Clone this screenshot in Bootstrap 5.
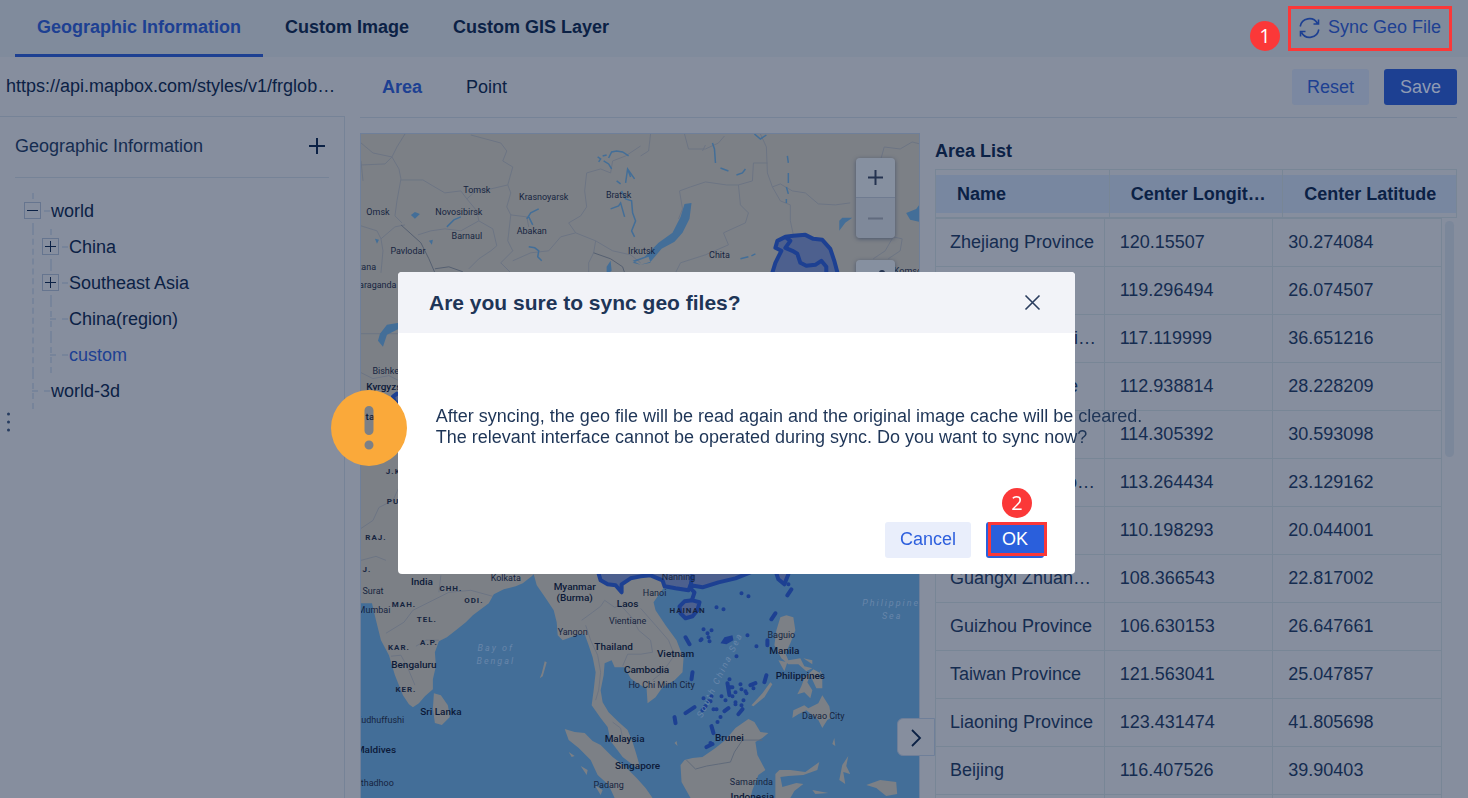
<!DOCTYPE html>
<html lang="en">
<head>
<meta charset="utf-8">
<meta name="viewport" content="width=device-width, initial-scale=1">
<title>Geographic Information</title>
<link href="https://cdn.jsdelivr.net/npm/bootstrap@5.3.0/dist/css/bootstrap.min.css" rel="stylesheet">
<style>
:root{--page:#868e9e;--bar:#808b9c;--line:#768397;--ink:#0b2145;--ink2:#152c50;--accent:#1d4092;--soft:#7b88a1;--red:#fb3838;--land:#7c8086;--sea:#436e98}
body{font-family:"Liberation Sans",Arial,sans-serif;font-size:18px;line-height:21px;color:var(--ink);background:var(--page);height:100vh;overflow:hidden}
.topbar{background:var(--bar);height:57px}
.topbar .nav-link{color:var(--ink);font-weight:700;padding:17px 22px 16px;border-bottom:3px solid transparent;line-height:21px}
.topbar .nav-link.active{color:var(--accent);border-color:var(--accent)}
.btn{font-size:18px;line-height:21px;border:0;border-radius:3px;height:36px;padding:0 15px}
.btn-sync{color:var(--accent);height:45px;padding:0 11px 2px;border-radius:0}
.callout-box{position:absolute;border:3px solid var(--red);pointer-events:none}
.callout-dot{position:absolute;width:30px;height:30px;border-radius:50%;background:var(--red);color:#fff;font:20px/30px "Open Sans","Noto Sans",sans-serif;text-align:center}
.side{width:345px;flex:none}
.url-row{height:59px;padding:0 6px}
.tree-panel{border:solid var(--line);border-width:1px 1px 0 0;padding:0 15px}
.tree-head{height:61px;border-bottom:1px solid var(--line);color:var(--ink2);padding-bottom:2px}
.grip{position:absolute;left:7px;top:412px}
.tree,.tree ul{list-style:none;margin:0;padding:0}
.tree{margin:15px 0 0 9px}
.tree ul{margin-left:18px;position:relative}
.tree ul::before{content:"";position:absolute;left:-10px;top:0;bottom:0;border-left:2px dashed #77849a}
.tree-node{height:36px;padding-left:27px;position:relative;display:flex;align-items:center}
.tree-node::before{content:"";position:absolute;left:8px;top:0;bottom:0;border-left:2px dashed #77849a}
.tree-node::after{content:"";position:absolute;left:8px;width:18px;top:17px;border-top:2px dashed #77849a}
.tree-node button{position:absolute;z-index:1;left:0;top:9px;width:17px;height:17px;padding:0;border:1px solid #66758f;background:var(--page);display:flex;color:var(--ink)}
.tree-node a{color:var(--ink);text-decoration:none}
.tree-node a.picked{color:var(--accent)}
.toolbar{height:61px;border-bottom:1px solid var(--line);flex:none}
.toolbar .nav-link{color:var(--ink);padding:8px 22px;line-height:21px}
.toolbar .nav-link.active{color:var(--accent);font-weight:700}
.btn-soft{background:var(--soft);color:var(--accent)}
.btn-main{background:var(--accent);color:#8f9bb3;padding:0 16px}
.map-box{border:1px solid #6f7f99;border-width:1px 1px 0;background:var(--sea)}
.map-box svg.world{display:block;width:100%;height:100%}
.zoomer{position:absolute;right:24px;top:24px;width:39px}
.zoomer button{display:flex;width:39px;height:40px;border:0;padding:0;background:#8690a0;align-items:center;justify-content:center;color:#243350}
.zoomer .pair{border-radius:4px;overflow:hidden;box-shadow:0 1px 4px #4a556b}
.fold{position:absolute;right:-16px;top:584px;width:38px;height:38px;border:1px solid #6f7f99;background:var(--page);border-radius:6px 0 0 6px;padding:0;color:var(--ink)}
.areas{width:522px;flex:none;overflow:hidden}
.grid{table-layout:fixed;width:100%;border-collapse:collapse}
.grid td,.grid th{border:1px solid #788696;padding:0}
.grid-head th{height:48px}
.grid-head th>div{background:#7887a0;height:38px;line-height:38px;padding:0 16px 0 22px;margin:0 -1px}
.grid-body{width:507px}
.grid-body td{height:48px;color:var(--ink2)}
.grid-body td>div{padding:0 9px 0 15px}
.grid-body td:first-child>div{padding:0 6px 0 14px}
.thumb{width:9px;height:236px;border-radius:5px;background:#7b879a;margin:3px 3px 0 0}
.veil{position:fixed;inset:0;z-index:10;padding:48px 0 0 5px}
.ask{width:677px;background:#fff;border-radius:4px;color:#1e3557}
.ask-head{height:61px;background:#f2f3f8;border-radius:4px 4px 0 0;padding:0 31px}
.ask-head h1{font-size:21px;line-height:24px;font-weight:700;margin:0}
.ask-body{height:189px}
.ask-foot{padding:0 31px 16px}
.ask .btn-soft{background:#e9eefb;color:#2d5fdd;padding-bottom:2px}
.ask .btn-main{background:#2a5fdc;color:#fff;padding-bottom:2px}
.world text{font-family:Roboto,"Open Sans",sans-serif;font-size:9px;fill:#16243f}
.world .big{font-weight:500;font-size:10px;fill:#0c1a38}
.world .st{font-weight:700;font-size:8px;letter-spacing:1px}
.world .wat{font-style:italic;font-size:9px;letter-spacing:2px;fill:#6886aa}
</style>
</head>
<body class="d-flex flex-column">
<header class="topbar d-flex justify-content-between flex-shrink-0">
  <nav class="nav" style="padding-left:15px">
    <a class="nav-link active" href="#">Geographic Information</a>
    <a class="nav-link" href="#">Custom Image</a>
    <a class="nav-link" href="#">Custom GIS Layer</a>
  </nav>
  <div class="align-self-start pe-3" style="padding-top:6px">
    <div class="position-relative">
      <button class="btn btn-sync d-flex align-items-center gap-2" type="button">
        <svg width="21" height="22" viewBox="0 0 21 22" fill="none" stroke="currentColor" stroke-width="1.600"><path d="M1.200 9.500A9.300 9.300 0 0 1 18.500 6.500M19.500 2.500V7H14.500M19.800 12.500A9.300 9.300 0 0 1 2.500 15.500M1.500 19.500V14.500H6.500"/></svg>
        Sync Geo File</button>
      <span class="callout-box top-0 bottom-0 start-0 end-0"></span>
      <span class="callout-dot" style="left:-38px;top:15px">1</span>
    </div>
  </div>
</header>
<main class="d-flex flex-grow-1" style="min-height:0">
  <aside class="side d-flex flex-column">
    <div class="url-row d-flex align-items-center">https://api.mapbox.com/styles/v1/frglob…</div>
    <div class="tree-panel flex-grow-1">
      <div class="tree-head d-flex align-items-center justify-content-between"><span>Geographic Information</span>
        <button class="btn p-0 d-flex align-items-center me-1" type="button" aria-label="Add"><svg width="16" height="16" viewBox="0 0 16 16" stroke="#0b2145" stroke-width="2"><path d="M8 0V16M0 8H16"/></svg></button></div>
      <ul class="tree">
        <li><div class="tree-node"><button type="button" aria-label="Collapse"><svg width="15" height="15" stroke="currentColor"><path d="M2 7.500H13"/></svg></button><a href="#">world</a></div>
          <ul>
            <li class="tree-node"><button type="button" aria-label="Expand"><svg width="15" height="15" stroke="currentColor"><path d="M2 7.500H13M7.500 2V13"/></svg></button><a href="#">China</a></li>
            <li class="tree-node"><button type="button" aria-label="Expand"><svg width="15" height="15" stroke="currentColor"><path d="M2 7.500H13M7.500 2V13"/></svg></button><a href="#">Southeast Asia</a></li>
            <li class="tree-node"><a href="#">China(region)</a></li>
            <li class="tree-node"><a href="#" class="picked">custom</a></li>
          </ul></li>
        <li class="tree-node"><a href="#">world-3d</a></li>
      </ul>
    </div>
    <svg class="grip" width="3" height="20" fill="#263c60"><circle cx="1.500" cy="2" r="1.500"/><circle cx="1.500" cy="10" r="1.500"/><circle cx="1.500" cy="18" r="1.500"/></svg>
  </aside>
  <section class="d-flex flex-column flex-grow-1" style="padding:0 11px 0 15px;min-width:0">
    <div class="toolbar d-flex align-items-center justify-content-between">
      <nav class="nav"><a class="nav-link active" href="#">Area</a><a class="nav-link" href="#">Point</a></nav>
      <div class="d-flex" style="gap:15px"><button class="btn btn-soft" type="button">Reset</button><button class="btn btn-main" type="button">Save</button></div>
    </div>
    <div class="d-flex flex-grow-1" style="gap:15px;padding-top:15px;min-height:0">
      <div class="map-box position-relative flex-grow-1">
        <svg class="world" viewBox="360 133 560 665" preserveAspectRatio="xMinYMin slice">
          <rect x="360" y="133" width="560" height="665" fill="#7c8086"/>
          <g fill="none" stroke="#6c7484" stroke-width="1">
            <path d="M360 142L372 152L391 156L396 146L404 133M391 156L384 163L360 164M391 156L398 168L400 178L396 200L394 215L401 222M400 179L422 179L432 185L444 192L460 190L466 198L475 190L490 188L507 184L512 166L502 160L506 150L500 142L485 138L470 134M507 184L510 192L506 206L510 214L526 216L528 226M510 214L507 240L512 250L500 262L510 272M466 198L476 210L478 220L492 228L496 245L490 250L478 258L468 268M360 225L376 230L380 238L394 226L404 224M380 238L382 250L380 272M444 228L460 230L478 220M417 234L430 230L444 228M512 260L530 252L548 250L560 236L575 232L568 222L580 215L586 206L584 190L586 172L600 168L610 172L612 160L625 155L640 145M575 232L595 240L612 250L630 254L640 262M360 160L362 180M595 240L593 252L588 262L588 272"/>
            <path d="M400 224L410 233L420 242L428 258L434 272M434 268L448 266L462 271M593 252L610 258L622 266L624 272" stroke="#555f70"/>
            <path d="M640 155L648 150L650 133M684 133L688 148L705 148L718 142L724 135M705 144L702 150M760 133L766 146L767 172L772 186L780 183L792 190L805 192L818 203L835 204L850 202M767 162L753 162L752 180L738 184L726 184L705 181L690 186L679 190L682 208L678 218M738 184L740 204L748 212L745 222L723 232L728 244L705 254L680 262L675 272M772 186L780 200L790 204L790 220L793 234M881 157L884 146L900 148L912 141L920 143M873 258L885 250L893 236L902 238L900 250L888 258"/>
            <path d="M360 333H398M360 372L372 378L388 375L398 380M360 528L372 520L378 507L392 500L398 487M360 560L375 556L385 560M385 633L403 622L412 610L432 600L448 592L470 590L492 596M415 646L425 640L438 640M390 656L400 655L407 668L414 685M440 575L438 592M581 620L592 612L600 606L604 600M585 625L590 640L597 655L600 672L598 690L595 700M604 600L614 607L620 605L632 618L638 630L650 640L652 652L640 654L627 654L622 666M640 608L655 625L668 640L674 655L662 672L652 680M612 722L620 728L622 738"/>
          </g>
          <g fill="#436e98">
            <path d="M691 202L689 218L682 232L674 241L661 248L650 261L640 264L632 260L644 256L658 242L672 232L680 216L684 203ZM640 264L650 262L648 256L632 262ZM920 203L916 208L906 212L910 219L920 221ZM839 220L842 217L852 217L845 222L839 230ZM410 214L414 211L419 213L414 218ZM398 322L386 324L379 333L377 340L382 346L386 334L398 328ZM606 266L610 260L611 270L606 274ZM374 238L378 239L376 243ZM428 240L432 239L431 244Z"/>
            <path d="M360 603H371L375 620L380 640L388 655L394 675L402 695L408 704L412 707L418 703L424 696L432 689L432 679L435 666L434 652L438 641L446 637L455 630L465 622L472 615L488 603L493 594L503 589L515 586L522 583L531 576L533 574L536 585L545 598L553 610L556 622L557 635L562 640L570 637L578 634L584 634L588 645L592 657L595 672L593 690L591 705L600 718L607 727L610 741L622 757L635 767L640 769L636 755L632 742L627 730L618 722L608 712L602 702L600 690L603 675L604 663L611 660L614 667L624 667L630 678L638 684L646 688L647 703L655 697L662 687L674 680L682 672L683 658L676 640L665 625L655 610L653 602L660 592L665 585L680 585L710 584L730 578L750 573H920V798H360Z"/>
          </g>
          <path fill="none" stroke="#436e98" stroke-width="1.500" d="M597 156L600 158L598 161M602 155L606 154M608 157L611 151L616 150L622 151L628 155M603 160L608 163L611 168M625 182L627 168L634 178M627 168L630 176M616 180L620 183M621 190L625 198L631 200L632 212L635 220L631 230L634 236M610 208L618 205L620 202L624 216M446 226L453 219L460 216M526 218L530 212L538 208M528 216L532 224M528 246L534 247L538 250L537 256L541 260M712 142L714 148L715 162M720 167L728 170M736 174L742 172L745 168M787 155L788 162M788 172L788 182M786 198V202M786 186L788 193M754 133L760 138L766 134M740 258L748 256M751 255L755 253"/>
          <g fill="#7c8086">
            <path d="M433 693L440 695L447 705L449 717L441 725L434 723L432 708ZM564 729L574 732L584 733L592 741L600 745L612 757L620 763L628 770L636 778L645 788L652 798H614L608 785L597 775L590 760L578 748L568 740ZM680 765L684 760L692 758L702 757L715 748L725 740L735 728L748 719L754 722L760 732L768 733L762 738L755 742L757 755L765 770L758 775L752 790L750 798H690L681 782ZM780 617L786 615L793 617L795 630L790 643L785 653L788 660L800 658L804 666L812 668L806 671L798 664L788 664L781 658L774 645L776 630ZM751 705L762 693L770 682L772 684L764 697L753 706ZM792 718L793 710L804 705L808 708L818 703L822 695L829 706L831 718L827 720L822 728L818 720L806 710L798 714ZM775 798V774L779 770L790 770L805 772L819 762L817 770L803 775L788 776L780 777L782 787L796 783L803 784L794 791L790 798ZM842 765L848 756L846 766L850 774L843 772L845 784L839 780ZM866 785L880 780L896 782L897 794L886 796L876 788ZM778 660L787 662L784 671ZM798 680L804 678L801 686L797 694L804 692L810 698L812 690L807 682L810 675L816 688L822 688L822 674L813 669L806 676ZM568 752L574 756L571 757ZM580 766L587 770L586 775ZM594 785L602 790L600 795ZM544 661L541 673L539 678L542 676L546 662ZM803 658L812 660L812 664ZM820 670L824 678L819 678ZM812 790L828 793L815 794ZM832 744L834 738L835 746ZM674 743L676 741L677 746Z"/>
          </g>
          <path d="M686 760L695 769L706 766L718 764L730 762L734 752L742 740L762 740" fill="none" stroke="#606a7a"/>
          <g fill="#4d608e" stroke="#1d4092" stroke-width="4" stroke-linejoin="round">
            <path d="M771 275L775 262L781 250L775 247L777 240L785 236L793 235L805 234L813 238L822 239L830 248L834 260L838 275Z"/>
            <path d="M785 236L790 240L785 247L792 250L797 253L800 262L806 265L815 264L821 260L826 266V274" fill="none"/>
            <path d="M597 570L600 580L607 584L615 585L621 592L621 584L630 578L640 576L650 575L662 580L664 586L675 588L688 590L690 585L702 587L718 582L735 578L750 572V565H597ZM679 606L684 601L692 600L699 602L697 610L692 616L685 618L680 613ZM775 570L778 579L784 584L788 574V570ZM392 396L396 393L402 394V402L394 402Z"/>
            <path d="M690 588L694 592L691 601M692 574L690 586" fill="none"/>
          </g>
          <path fill="none" stroke="#1d4092" stroke-width="4" stroke-linecap="round" d="M741 593h.1M748 596h.1M716 607h.1M723 609h.1M747 635h.1M756 646h.1M736 656h.1M788 584h.1M787 595L791 589M771 619L775 613M685 637L689 644M767 640V645M692 672L691 679M764 682L766 675M674 717L675 723M738 714L742 709M703 629h.1M707 633h.1M711 630h.1M701 639h.1M708 637h.1M709 641h.1M700 640h.1M729 679h.1M727 683L729 695M728 687h4M740 684h.1M741 689h.1M745 691h.1M735 692h.1M750 685L755 683M753 688h.1M725 700h.1M721 696h.1M732 696h.1M735 702h.1M716 709h.1M713 709h.1M724 711L728 708M702 710L705 706M708 701h.1M711 696h.1M685 713L694 707M703 698h.1M710 701h.1M746 693h.1M735 704h.1M743 700h.1M741 705h.1M720 717h.1M717 722h.1M711 726L713 733M706 747L712 744M710 743h.1"/>
          <path fill="#1d4092" d="M720 643L724 637L732 635L733 640L726 644Z"/>
          <g text-anchor="middle" transform="translate(0 -1)">
            <text x="476" y="193">Tomsk</text><text x="543" y="200">Krasnoyarsk</text><text x="618" y="198">Bratsk</text><text x="377" y="215">Omsk</text><text x="458" y="215">Novosibirsk</text><text x="466" y="239">Barnaul</text><text x="531" y="234">Abakan</text><text x="407" y="254">Pavlodar</text><text x="641" y="254">Irkutsk</text><text x="719" y="258">Chita</text><text x="920" y="274">Komsomolsk</text><text x="361" y="270">Astana</text><text x="374" y="288">Karaganda</text><text x="387" y="374">Bishkek</text><text class="big" x="390" y="390">Kyrgyzstan</text><text class="big" x="369" y="420">ta</text><text class="st" x="394" y="475">J.K.</text><text class="st" x="397" y="505">PUN.</text><text class="st" x="375" y="541">RAJ.</text><text class="st" x="366" y="573">J.</text>
            <text class="big" x="421" y="586">India</text><text x="505" y="582">Kolkata</text><text class="st" x="450" y="592">CHH.</text><text x="372" y="595">Surat</text><text class="st" x="473" y="604">ODI.</text><text class="st" x="403" y="608">MAH.</text><text x="373" y="614">Mumbai</text><text class="st" x="426" y="623">TEL.</text><text class="st" x="428" y="646">A.P.</text><text class="st" x="398" y="651">KAR.</text><text class="big" x="413" y="669">Bengaluru</text><text class="st" x="405" y="693">KER.</text><text class="big" x="440" y="716">Sri Lanka</text><text x="379" y="724">Kudhuffushi</text><text class="big" x="375" y="754">Maldives</text><text x="372" y="787">Hithadhoo</text>
            <text class="wat" x="495" y="652">Bay of</text><text class="wat" x="495" y="665">Bengal</text>
            <text class="big" x="574" y="591">Myanmar</text><text class="big" x="574" y="602">(Burma)</text><text class="big" x="627" y="608">Laos</text><text x="627" y="625">Vientiane</text><text x="572" y="636">Yangon</text><text class="big" x="613" y="651">Thailand</text><text x="678" y="581">Nanning</text><text x="654" y="597">Hanoi</text><text class="st" x="687" y="614">HAINAN</text><text class="big" x="675" y="658">Vietnam</text><text class="big" x="646" y="674">Cambodia</text><text x="661" y="689">Ho Chi Minh City</text><text class="big" x="624" y="743">Malaysia</text><text class="big" x="637" y="770">Singapore</text><text x="608" y="789">Padang</text><text class="big" x="729" y="742">Brunei</text><text x="751" y="786">Samarinda</text><text class="big" x="752" y="801">Indonesia</text><text x="781" y="639">Baguio</text><text class="big" x="784" y="655">Manila</text><text class="big" x="800" y="680">Philippines</text><text x="823" y="720">Davao City</text>
            <text class="wat" x="891" y="607">Philippine</text><text class="wat" x="892" y="620">Sea</text><text class="wat" transform="translate(722 677) rotate(-64)">South China Sea</text>
          </g>
        </svg>
        <div class="zoomer">
          <div class="pair"><button type="button" aria-label="Zoom in" style="border-bottom:1px solid #6f7b90"><svg width="15" height="15" stroke="currentColor" stroke-width="2"><path d="M7.500 0V15M0 7.500H15"/></svg></button><button type="button" aria-label="Zoom out" style="background:#7f899a;color:#616b7e"><svg width="15" height="15" stroke="currentColor" stroke-width="2"><path d="M0 7.500H15"/></svg></button></div>
          <div class="pair" style="margin-top:22px"><button type="button" aria-label="Draw"><svg width="20" height="26" viewBox="0 0 20 26" fill="none" stroke="currentColor" stroke-width="2"><circle cx="16" cy="6" r="2"/><path d="M14 8L5 18"/></svg></button></div>
        </div>
        <button class="fold" type="button" aria-label="Collapse list"><svg width="12" height="20" viewBox="0 0 12 20" fill="none" stroke="currentColor" stroke-width="1.800"><path d="M2 2L10 10L2 18"/></svg></button>
      </div>
      <div class="areas">
        <h2 class="fw-bold m-0" style="font-size:18px;line-height:36px">Area List</h2>
        <table class="grid grid-head"><thead><tr><th><div class="text-truncate">Name</div></th><th><div class="text-truncate">Center Longitude</div></th><th><div class="text-truncate">Center Latitude</div></th></tr></thead></table>
        <div class="d-flex justify-content-between">
        <table class="grid grid-body"><tbody>
          <tr><td><div class="text-truncate">Zhejiang Province</div></td><td><div>120.15507</div></td><td><div>30.274084</div></td></tr>
          <tr><td><div class="text-truncate">Fujian Province</div></td><td><div>119.296494</div></td><td><div>26.074507</div></td></tr>
          <tr><td><div class="text-truncate">Shandong Province</div></td><td><div>117.119999</div></td><td><div>36.651216</div></td></tr>
          <tr><td><div class="text-truncate">Hunan Province</div></td><td><div>112.938814</div></td><td><div>28.228209</div></td></tr>
          <tr><td><div class="text-truncate">Hubei Province</div></td><td><div>114.305392</div></td><td><div>30.593098</div></td></tr>
          <tr><td><div class="text-truncate">Guangdong Province</div></td><td><div>113.264434</div></td><td><div>23.129162</div></td></tr>
          <tr><td><div class="text-truncate">Hainan</div></td><td><div>110.198293</div></td><td><div>20.044001</div></td></tr>
          <tr><td><div class="text-truncate">Guangxi Zhuang Region</div></td><td><div>108.366543</div></td><td><div>22.817002</div></td></tr>
          <tr><td><div class="text-truncate">Guizhou Province</div></td><td><div>106.630153</div></td><td><div>26.647661</div></td></tr>
          <tr><td><div class="text-truncate">Taiwan Province</div></td><td><div>121.563041</div></td><td><div>25.047857</div></td></tr>
          <tr><td><div class="text-truncate">Liaoning Province</div></td><td><div>123.431474</div></td><td><div>41.805698</div></td></tr>
          <tr><td><div class="text-truncate">Beijing</div></td><td><div>116.407526</div></td><td><div>39.90403</div></td></tr>
          <tr><td></td><td></td><td></td></tr>
        </tbody></table>
        <div class="thumb"></div>
        </div>
      </div>
    </div>
  </section>
</main>
<div class="veil d-flex align-items-center justify-content-center">
  <div class="ask" role="dialog" aria-labelledby="ask-title">
    <div class="ask-head d-flex align-items-center justify-content-between"><h1 id="ask-title">Are you sure to sync geo files?</h1>
      <button class="btn p-0 d-flex align-items-center" type="button" aria-label="Close" style="margin-right:3px"><svg width="17" height="17" viewBox="0 0 17 17" stroke="#2a3d5e" stroke-width="1.600"><path d="M1.500 1.500L15.500 15.500M15.500 1.500L1.500 15.500"/></svg></button></div>
    <div class="ask-body d-flex align-items-center justify-content-center">
      <svg class="flex-shrink-0" width="76" height="76" viewBox="0 0 76 76"><path fill="#faa93a" fill-rule="evenodd" d="M38 0A38 38 0 1 1 38 76A38 38 0 1 1 38 0ZM38 16A4.500 4.500 0 0 0 33.500 20.500V40.500A4.500 4.500 0 0 0 42.500 40.500V20.500A4.500 4.500 0 0 0 38 16ZM38 50.500A4.500 4.500 0 1 0 38 59.500A4.500 4.500 0 1 0 38 50.500Z"/></svg>
      <p class="m-0 text-nowrap flex-shrink-0" style="padding:0 0 2px 29px">After syncing, the geo file will be read again and the original image cache will be cleared.<br>The relevant interface cannot be operated during sync. Do you want to sync now?</p>
    </div>
    <div class="ask-foot d-flex justify-content-end" style="gap:15px">
      <button class="btn btn-soft" type="button">Cancel</button>
      <div class="position-relative"><button class="btn btn-main" type="button">OK</button>
        <span class="callout-box" style="left:2px;top:0;right:-3px;height:34px"></span><span class="callout-dot" style="left:16px;top:-34px">2</span></div>
    </div>
  </div>
</div>
<script src="https://cdn.jsdelivr.net/npm/bootstrap@5.3.0/dist/js/bootstrap.bundle.min.js"></script>
</body>
</html>
